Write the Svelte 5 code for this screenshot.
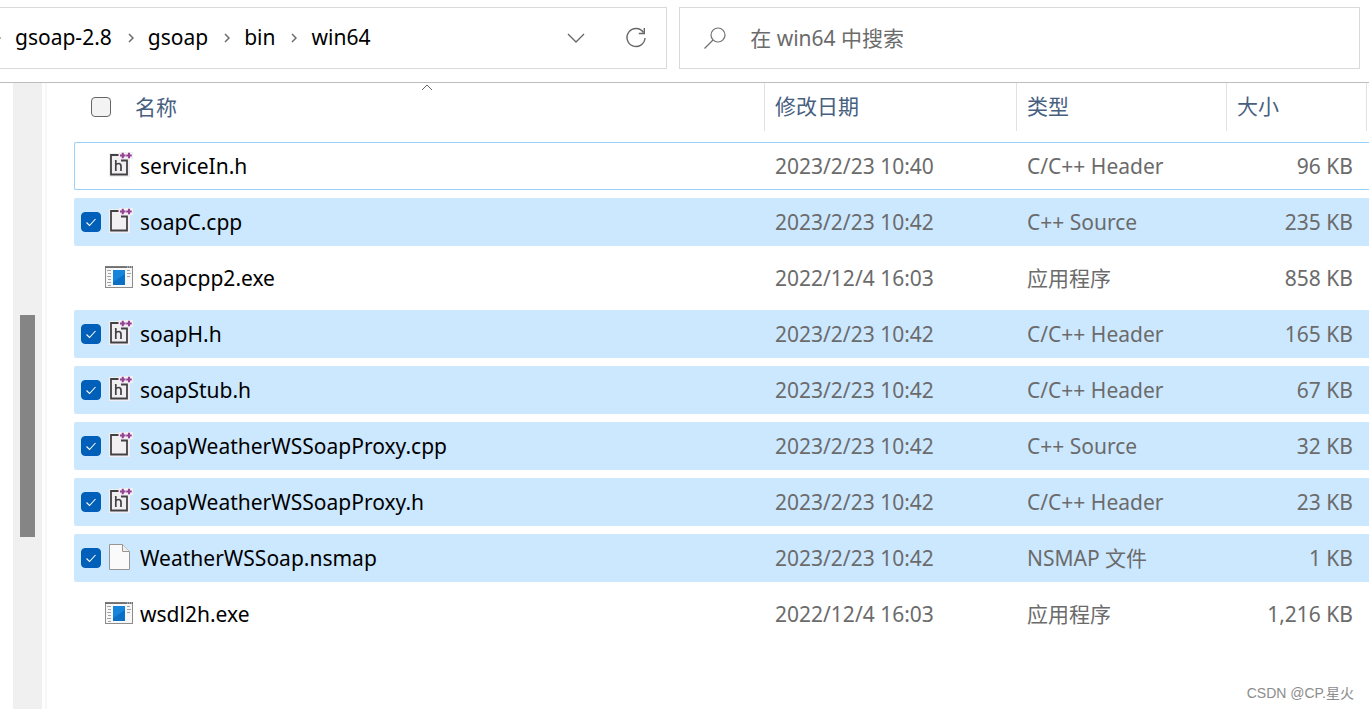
<script>
    const crumbs = ["gsoap-2.8", "gsoap", "bin", "win64"];

    let query = $state("");

    let files = $state([
        { name: "serviceIn.h", date: "2023/2/23 10:40", type: "C/C++ Header", size: "96 KB", icon: "header", selected: false, focused: true },
        { name: "soapC.cpp", date: "2023/2/23 10:42", type: "C++ Source", size: "235 KB", icon: "source", selected: true },
        { name: "soapcpp2.exe", date: "2022/12/4 16:03", type: "应用程序", size: "858 KB", icon: "exe", selected: false },
        { name: "soapH.h", date: "2023/2/23 10:42", type: "C/C++ Header", size: "165 KB", icon: "header", selected: true },
        { name: "soapStub.h", date: "2023/2/23 10:42", type: "C/C++ Header", size: "67 KB", icon: "header", selected: true },
        { name: "soapWeatherWSSoapProxy.cpp", date: "2023/2/23 10:42", type: "C++ Source", size: "32 KB", icon: "source", selected: true },
        { name: "soapWeatherWSSoapProxy.h", date: "2023/2/23 10:42", type: "C/C++ Header", size: "23 KB", icon: "header", selected: true },
        { name: "WeatherWSSoap.nsmap", date: "2023/2/23 10:42", type: "NSMAP 文件", size: "1 KB", icon: "page", selected: true },
        { name: "wsdl2h.exe", date: "2022/12/4 16:03", type: "应用程序", size: "1,216 KB", icon: "exe", selected: false },
    ]);

    function toggleAll(e) {
        for (const file of files) {
            file.selected = e.target.checked;
        }
    }
</script>

{#snippet separator()}
    <svg class="separator" width="6" height="10" viewBox="0 0 6 10" aria-hidden="true">
        <path d="M1 1l4 4-4 4" fill="none" stroke="#6b6b6b" stroke-width="1.5" />
    </svg>
{/snippet}

{#snippet fileIcon(kind)}
    <svg class="file-icon" width="28" height="28" viewBox="0 0 28 28" aria-hidden="true">
        {#if kind === "exe"}
            <rect x="0.5" y="2.5" width="27" height="21" fill="#f7f7f7" stroke="#8c8c8c" />
            <path d="M0 3.2h28" stroke="#707070" stroke-width="1.6" />
            <path d="M22 3h1M24 3h1M26 3h1" stroke="#ddd" />
            <path d="M2 6.5h4M3 9.5h3M2 12.5h4M3 15.5h3M2 18.5h4M3 21.5h3M22 6.5h3M22 9.5h4M22 12.5h3" stroke="#a3a3a3" />
            <rect x="8" y="6" width="12" height="15" fill="#0b6fc6" />
            <path d="M8 6h12v4l-12 8z" fill="#1585dc" />
        {:else if kind === "page"}
            <path d="M4.5 0.5h13l7 7v18h-20z" fill="#fafafa" stroke="#969696" />
            <path d="M17.5 0.5v7h7" fill="#eee" stroke="#969696" />
        {:else}
            <path d="M4 1h10V0h14v7h-3v18H4z" fill="#f1eff2" />
            <path d="M13.5 3h-7.5v19.500h16V8.500H16" fill="none" stroke="#424242" stroke-width="1.8" />
            <path d="M15 3.500h5.500M17.750 0.800v5.400M21.200 3.500h5.500M24 0.800v5.400" stroke="#953f95" stroke-width="2" />
            {#if kind === "header"}
                <path d="M10.800 8v11M10.800 13q1.200-1.500 2.800-1.500 2.400 0 2.400 2.800v4.700" fill="none" stroke="#424242" stroke-width="1.7" />
            {/if}
        {/if}
    </svg>
{/snippet}

<div class="explorer">
    <header class="toolbar">
        <div class="address">
            <nav>
                <ol>
                    {#each crumbs as crumb}
                        <li>
                            {@render separator()}
                            <a href="#{crumb}">{crumb}</a>
                        </li>
                    {/each}
                </ol>
            </nav>
            <button class="tool" aria-label="历史记录">
                <svg width="18" height="10" viewBox="0 0 18 10">
                    <path d="M1 1l8 8 8-8" fill="none" stroke="#666" stroke-width="1.3" />
                </svg>
            </button>
            <button class="tool" aria-label="刷新">
                <svg width="22" height="22" viewBox="0 0 22 22">
                    <path d="M18.500 5.500A9 9 0 1 0 20 11" fill="none" stroke="#666" stroke-width="1.4" />
                    <path d="M19.300 1v5.500h-5.500" fill="none" stroke="#666" stroke-width="1.4" />
                </svg>
            </button>
        </div>
        <label class="search">
            <svg width="22" height="22" viewBox="0 0 22 22" aria-hidden="true">
                <circle cx="14" cy="8" r="7" fill="none" stroke="#707070" stroke-width="1.2" />
                <path d="M9 13l-8.500 8.500" stroke="#707070" stroke-width="1.3" />
            </svg>
            <input type="search" bind:value={query} placeholder="在 win64 中搜索" aria-label="搜索" />
        </label>
    </header>

    <div class="content">
        <aside class="tree">
            <div class="track">
                <div class="thumb"></div>
            </div>
        </aside>

        <main>
            <table>
                <thead>
                    <tr>
                        <th class="col-name">
                            <div class="heading first">
                                <input type="checkbox" aria-label="全选" onchange={toggleAll} />
                                <span>名称</span>
                                <svg class="sort" width="12" height="7" viewBox="0 0 12 7" aria-hidden="true">
                                    <path d="M1 6l5-5 5 5" fill="none" stroke="#666" />
                                </svg>
                            </div>
                        </th>
                        <th class="col-date"><div class="heading">修改日期</div></th>
                        <th class="col-type"><div class="heading">类型</div></th>
                        <th class="col-size"><div class="heading last">大小</div></th>
                    </tr>
                </thead>
                <tbody>
                    {#each files as file}
                        <tr class:selected={file.selected} class:focused={file.focused}>
                            <td>
                                <label class="file">
                                    <span class="check">
                                        <input type="checkbox" bind:checked={file.selected} />
                                        {#if file.selected}
                                            <svg width="20" height="20" viewBox="0 0 20 20" aria-hidden="true">
                                                <path d="M5.500 10.500l3 3 6-6.500" fill="none" stroke="#fff" stroke-width="1.100" />
                                            </svg>
                                        {/if}
                                    </span>
                                    {@render fileIcon(file.icon)}
                                    <span class="name">{file.name}</span>
                                </label>
                            </td>
                            <td>{file.date}</td>
                            <td>{file.type}</td>
                            <td class="size">{file.size}</td>
                        </tr>
                    {/each}
                </tbody>
            </table>
        </main>
    </div>
    <span class="watermark">CSDN @CP.星火</span>
</div>

<style>
    :global(body) {
        margin: 0;
        background: #fff;
    }

    .explorer {
        position: relative;
        display: flex;
        flex-direction: column;
        min-height: 100vh;
        overflow: hidden;
        font-family: "Noto Sans", "Noto Sans CJK SC", sans-serif;
        font-size: 21px;
        line-height: 30px;
        color: #000;
    }

    .toolbar {
        display: grid;
        grid-template-columns: 49fr 50fr;
        gap: 12px;
        padding: 7px 9px 13px 0;
        border-bottom: 1px solid #bdbdbd;
    }

    .address,
    .search {
        display: flex;
        align-items: center;
        box-sizing: border-box;
        height: 62px;
        border: 1px solid #d9d9d9;
    }

    .address {
        border-left: none;
        padding-right: 6px;
        overflow: hidden;
    }

    nav {
        flex: 1;
        margin-left: -21px;
        padding-bottom: 2px;
    }

    ol {
        display: flex;
        margin: 0;
        padding: 0;
        list-style: none;
    }

    li {
        display: flex;
        align-items: center;
    }

    .separator {
        margin: 2px 14px 0 16px;
    }

    a {
        color: inherit;
        text-decoration: none;
    }

    .tool {
        display: flex;
        align-items: center;
        justify-content: center;
        width: 48px;
        height: 48px;
        margin-left: 12px;
        padding: 0;
        border: none;
        background: none;
    }

    .search {
        gap: 24px;
        padding: 0 24px;
    }

    .search input {
        flex: 1;
        min-width: 0;
        padding: 0;
        border: none;
        outline: none;
        background: none;
        font: inherit;
        color: #000;
    }

    .search input::placeholder {
        color: #6b6b6b;
    }

    .content {
        display: flex;
        flex: 1;
    }

    .tree {
        display: flex;
        padding: 0 3px 0 13px;
        border-right: 2px solid #f7f7f7;
    }

    .track {
        display: grid;
        grid-template-rows: 232fr 222fr 172fr;
        width: 15px;
        padding: 0 7px;
        background: #f0f0f0;
    }

    .thumb {
        grid-row: 2;
        background: #858585;
    }

    main {
        flex: 1;
        padding-left: 27px;
    }

    table {
        width: 100%;
        margin-top: -8px;
        border-spacing: 0 8px;
        table-layout: fixed;
    }

    th {
        height: 51px;
        padding: 0;
        vertical-align: top;
        text-align: left;
        font-weight: normal;
        color: #47607f;
    }

    .col-date {
        width: 252px;
    }

    .col-type {
        width: 210px;
    }

    .col-size {
        width: 143px;
    }

    .heading {
        display: flex;
        align-items: center;
        box-sizing: border-box;
        height: 48px;
        padding: 0 0 2px 10px;
        border-left: 1px solid #e2e2e2;
    }

    .first {
        position: relative;
        gap: 24px;
        padding: 0 0 0 17px;
        border-left: none;
    }

    .last {
        margin-right: 2px;
        border-right: 1px solid #e2e2e2;
    }

    .sort {
        position: absolute;
        top: 1px;
        left: calc(50% + 2px);
    }

    td {
        box-sizing: border-box;
        height: 48px;
        padding: 0 0 0 11px;
        border: 1px solid transparent;
        border-width: 1px 0;
        color: #6b6b6b;
        white-space: nowrap;
    }

    td:first-child {
        padding: 0 0 0 6px;
        border-left-width: 1px;
        border-radius: 2px 0 0 2px;
    }

    .selected td {
        background: #cce8ff;
    }

    .focused td {
        border-color: #99d1ff;
    }

    td.size {
        padding: 0 16px 0 0;
        text-align: right;
    }

    .file {
        display: flex;
        align-items: center;
        color: #000;
    }

    .name {
        margin-left: 7px;
    }

    .check {
        display: grid;
        margin-right: 4px;
    }

    .check > * {
        grid-area: 1 / 1;
    }

    .check svg {
        pointer-events: none;
    }

    input[type="checkbox"] {
        appearance: none;
        box-sizing: border-box;
        width: 20px;
        height: 20px;
        margin: 0;
        border: 1px solid #666;
        border-radius: 4px;
        background: #f3f3f3;
    }

    .check input {
        opacity: 0;
    }

    tr:hover .check input,
    .selected .check input {
        opacity: 1;
    }

    input[type="checkbox"]:checked {
        border-color: #005fb8;
        background: #005fb8;
    }

    .watermark {
        position: absolute;
        right: 15px;
        bottom: 6px;
        font-family: "Liberation Sans", "Noto Sans CJK SC", sans-serif;
        font-size: 14px;
        line-height: 20px;
        color: #8c8c8c;
    }
</style>
